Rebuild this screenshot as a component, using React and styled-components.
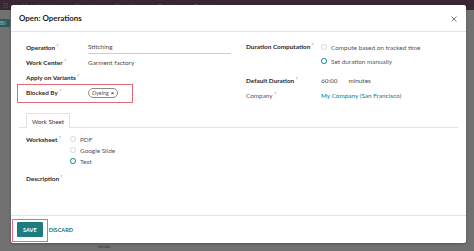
import React from "react";
import styled, { createGlobalStyle } from "styled-components";

const GlobalStyle = createGlobalStyle`
  html, body {
    margin: 0;
    padding: 0;
    background: #6f6f6f;
  }
  body {
    font-family: Lato, "Open Sans", "Liberation Sans", sans-serif;
    -webkit-font-smoothing: antialiased;
  }
`;

const TEAL = "#017e84";
const MARK = "#e36b77";

const Screen = styled.div`
  position: relative;
  width: 474px;
  height: 251px;
  overflow: hidden;
  background: #717171;
  display: flex;
  flex-direction: column;
`;

const TopBar = styled.div`
  height: 10px;
  background: #3a2734;
  display: flex;
  align-items: center;
  gap: 14px;
  padding-left: 3px;
  font-size: 6px;
  color: #6e5a67;
  white-space: nowrap;
`;

const BackPage = styled.div`
  flex: 1;
  padding: 9px 0 0 0;
  display: flex;
  flex-direction: column;
`;

const GhostButton = styled.div`
  width: 10px;
  height: 8px;
  background: #2f5a5c;
  color: #9bb;
  font-size: 5px;
  line-height: 8px;
  border-radius: 0 1px 1px 0;
`;

const GhostFoot = styled.div`
  margin-top: auto;
  padding: 0 0 2px 98px;
  font-size: 4px;
  color: #333;
`;

const Modal = styled.div`
  position: absolute;
  left: 11px;
  top: 5px;
  width: 455px;
  height: 238px;
  background: #fff;
  border-radius: 2px;
  display: flex;
  flex-direction: column;
  box-shadow: 0 1px 3px rgba(0, 0, 0, 0.25);
`;

const Header = styled.div`
  height: 26px;
  flex: none;
  display: flex;
  align-items: center;
  justify-content: space-between;
  padding: 0 9px 0 8px;
  border-bottom: 1px solid #e4e4e4;
`;

const Title = styled.div`
  font-size: 7.9px;
  font-weight: 700;
  color: #222;
`;

const Close = styled.svg`
  width: 6px;
  height: 6px;
  margin-top: 1px;
`;

const Body = styled.div`
  flex: 1;
  padding: 8px 8px 0 8px;
`;

const TopGrid = styled.div`
  display: grid;
  grid-template-columns: 220px 1fr;
  padding-left: 7px;
`;

const Group = styled.div`
  display: flex;
  flex-direction: column;
`;

const Row = styled.div`
  position: relative;
  display: grid;
  grid-template-columns: ${(p) => p.$label}px 1fr;
  align-items: start;
  margin-top: ${(p) => p.$mt || 0}px;
  min-height: 15px;
`;

const Label = styled.div`
  font-size: 6.4px;
  font-weight: ${(p) => (p.$light ? 400 : 700)};
  color: ${(p) => (p.$light ? "#555" : "#2a2a2a")};
  white-space: nowrap;
  height: ${(p) => p.$lh || 15}px;
  line-height: ${(p) => p.$lh || 15}px;
`;

const Help = styled.span`
  display: inline-block;
  font-size: 4px;
  line-height: 0;
  font-weight: 400;
  color: #4e7f9a;
  margin-left: 1.5px;
  position: relative;
  top: -3px;
`;

const Value = styled.div`
  font-size: 6.4px;
  line-height: 15px;
  color: ${(p) => p.$color || "#4a4a4a"};
  white-space: nowrap;
`;

const Input = styled.div`
  font-size: 6.4px;
  line-height: 13px;
  height: 13px;
  color: #4a4a4a;
  border-bottom: 1.5px solid #bcd5d7;
  width: 143px;
`;

const Mark = styled.div`
  position: absolute;
  left: -9px;
  top: -1px;
  width: 116px;
  height: 19px;
  border: 1.2px solid ${MARK};
  box-sizing: border-box;
  pointer-events: none;
`;

const TagCell = styled.div`
  height: 15px;
  display: flex;
  align-items: center;
`;

const Tag = styled.span`
  display: inline-flex;
  align-items: center;
  gap: 2px;
  height: 8px;
  padding: 0 3px;
  border: 0.8px solid #8a8a8a;
  border-radius: 5px;
  font-size: 5.4px;
  color: #555;
  line-height: 8px;
`;

const TagX = styled.span`
  font-size: 6px;
  font-weight: 700;
  color: #444;
`;

const RadioList = styled.div`
  display: flex;
  flex-direction: column;
`;

const RadioItem = styled.div`
  display: flex;
  align-items: center;
  gap: 4.5px;
  height: ${(p) => p.$h}px;
  font-size: 6.4px;
  color: #555;
  white-space: nowrap;
`;

const RadioDot = styled.span`
  width: 5.5px;
  height: 5.5px;
  border-radius: 50%;
  box-sizing: border-box;
  flex: none;
  border: ${(p) => (p.$on ? `1.8px solid ${TEAL}` : "0.8px solid #d6d6d6")};
  background: #fff;
`;

const Minutes = styled.span`
  margin-left: 11px;
`;

const TabStrip = styled.div`
  margin-top: 10px;
  display: flex;
  padding-left: 7px;
  border-bottom: 1px solid #e2e2e2;
`;

const Tab = styled.div`
  height: 15px;
  margin-bottom: -1px;
  padding: 0 5px;
  font-size: 6.2px;
  line-height: 15px;
  color: #333;
  background: #fff;
  border: 1px solid #e2e2e2;
  border-bottom-color: #fff;
  border-radius: 2px 2px 0 0;
  box-sizing: border-box;
`;

const TabPane = styled.div`
  padding: 6px 0 0 7px;
  display: flex;
  flex-direction: column;
`;

const Footer = styled.div`
  height: 28px;
  flex: none;
  border-top: 1px solid #e4e4e4;
  display: flex;
  align-items: center;
  gap: 5px;
  padding: 0 0 0 6px;
  box-sizing: border-box;
`;

const SaveWrap = styled.div`
  position: relative;
  display: flex;
`;

const SaveMark = styled.div`
  position: absolute;
  left: -5px;
  top: -3px;
  right: -5px;
  bottom: -5px;
  border: 1.2px solid ${MARK};
  pointer-events: none;
`;

const Button = styled.button`
  font-family: inherit;
  font-size: 5.6px;
  font-weight: 700;
  height: 15px;
  padding: ${(p) => (p.$primary ? "0 6px" : "0 1px")};
  border: none;
  border-radius: 1px;
  background: ${(p) => (p.$primary ? "#1e7c80" : "transparent")};
  color: ${(p) => (p.$primary ? "#fff" : "#1f6f74")};
  cursor: pointer;
`;

const L = ({ children, light, lh }) => (
  <Label $light={light} $lh={lh}>
    {children}
    <Help>?</Help>
  </Label>
);

export default function App() {
  return (
    <>
      <GlobalStyle />
      <Screen>
        <TopBar>
          <span>☷</span>
          <span>Manufacturing</span>
          <span>Overview</span>
          <span>Operations</span>
          <span>Planning</span>
          <span>Products</span>
        </TopBar>
        <BackPage>
          <GhostButton>Bil</GhostButton>
          <GhostFoot>rdcular</GhostFoot>
        </BackPage>

        <Modal>
          <Header>
            <Title>Open: Operations</Title>
            <Close viewBox="0 0 6 6">
              <path d="M0.5 0.5 L5.5 5.5 M5.5 0.5 L0.5 5.5" stroke="#555" strokeWidth="0.8" />
            </Close>
          </Header>

          <Body>
            <TopGrid>
              <Group>
                <Row $label={62}>
                  <L>Operation</L>
                  <Input>Stitching</Input>
                </Row>
                <Row $label={62}>
                  <L>Work Center</L>
                  <Value>Garment factory</Value>
                </Row>
                <Row $label={62}>
                  <L>Apply on Variants</L>
                  <Value />
                </Row>
                <Row $label={62}>
                  <Mark />
                  <L>Blocked By</L>
                  <TagCell>
                    <Tag>
                      Dyeing <TagX>×</TagX>
                    </Tag>
                  </TagCell>
                </Row>
              </Group>

              <Group>
                <Row $label={75}>
                  <L lh={14}>Duration Computation</L>
                  <RadioList>
                    <RadioItem $h={14}>
                      <RadioDot />
                      Compute based on tracked time
                    </RadioItem>
                    <RadioItem $h={14}>
                      <RadioDot $on />
                      Set duration manually
                    </RadioItem>
                  </RadioList>
                </Row>
                <Row $label={75} $mt={4.5}>
                  <L>Default Duration</L>
                  <Value>
                    60:00<Minutes>minutes</Minutes>
                  </Value>
                </Row>
                <Row $label={75}>
                  <L light>Company</L>
                  <Value $color={TEAL}>My Company (San Francisco)</Value>
                </Row>
              </Group>
            </TopGrid>

            <TabStrip>
              <Tab>Work Sheet</Tab>
            </TabStrip>

            <TabPane>
              <Row $label={44}>
                <L lh={11}>Worksheet</L>
                <RadioList>
                  <RadioItem $h={11}>
                    <RadioDot />
                    PDF
                  </RadioItem>
                  <RadioItem $h={11}>
                    <RadioDot />
                    Google Slide
                  </RadioItem>
                  <RadioItem $h={11}>
                    <RadioDot $on />
                    Text
                  </RadioItem>
                </RadioList>
              </Row>
              <Row $label={44} $mt={4}>
                <L>Description</L>
              </Row>
            </TabPane>
          </Body>

          <Footer>
            <SaveWrap>
              <Button $primary>SAVE</Button>
              <SaveMark />
            </SaveWrap>
            <Button>DISCARD</Button>
          </Footer>
        </Modal>
      </Screen>
    </>
  );
}
